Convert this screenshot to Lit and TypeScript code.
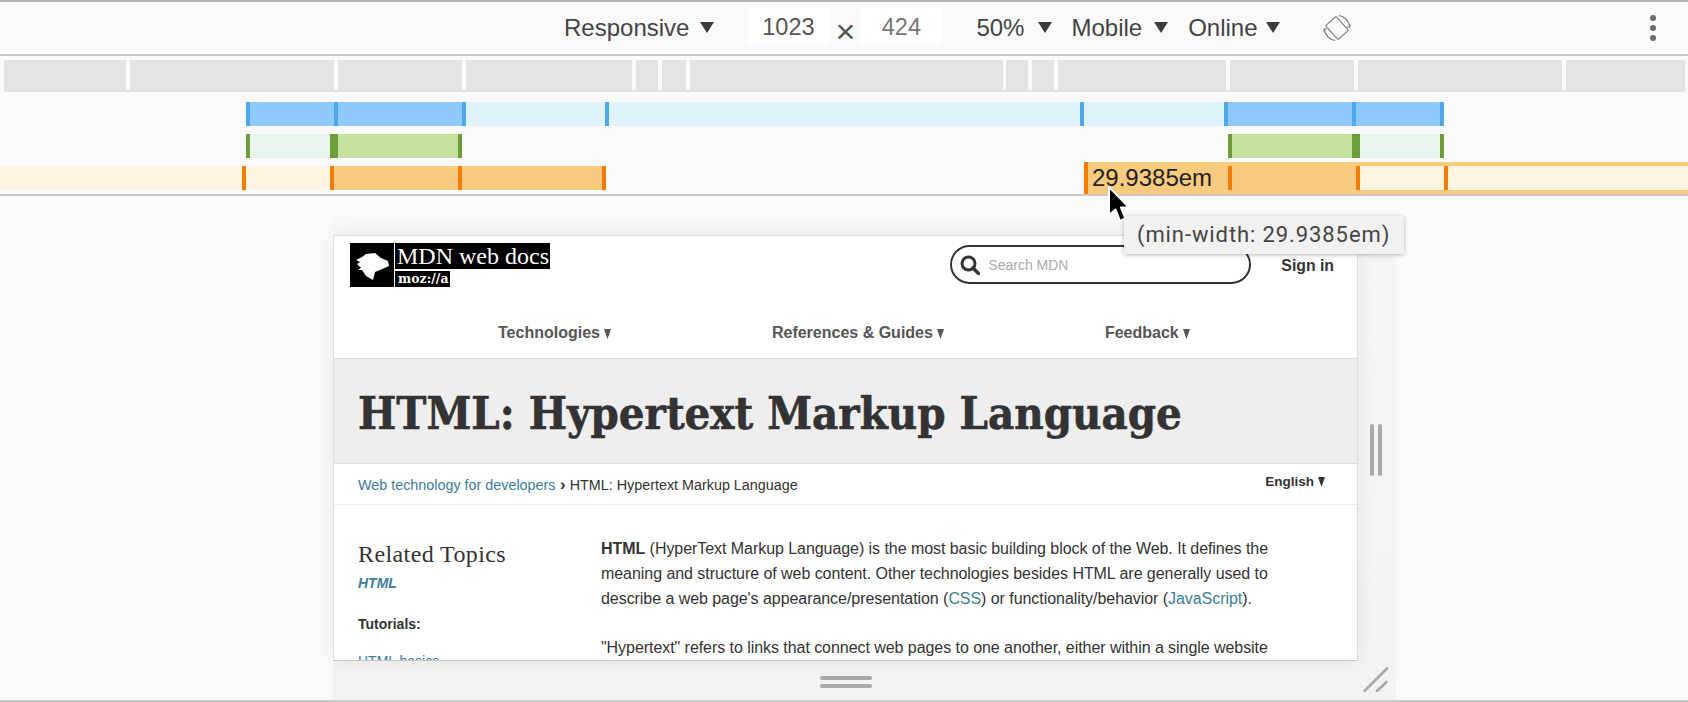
import { LitElement, html, css } from "lit";
import { customElement } from "lit/decorators.js";

type Piece = [number, string];
// A band is a list of [end-x, class] pieces laid out left to right from `start`.
const bandPieces = (start: number, pieces: Piece[]) => {
  let x = start;
  return pieces.map(([end, cls]) => {
    const w = end - x;
    x = end;
    return html`<i class=${cls} style="width:${w}px"></i>`;
  });
};

const rulerPieces: Piece[] = [
  [126, ""], [130, "t"], [334, ""], [338, "t"], [462, ""], [466, "t"], [632, ""], [636, "t"],
  [658, ""], [662, "t"], [686, ""], [690, "t"], [1003, ""], [1006, "t"], [1028, ""], [1032, "t"],
  [1054, ""], [1058, "t"], [1226, ""], [1230, "t"], [1354, ""], [1358, "t"], [1562, ""], [1566, "t"],
];
const bluePieces: Piece[] = [
  [246, ""], [250, "m"], [334, "d"], [338, "m"], [462, "d"], [466, "m"], [605, "l"], [609, "m"],
  [1080, "l"], [1084, "m"], [1224, "l"], [1228, "m"], [1352, "d"], [1356, "m"], [1440, "d"], [1444, "m"],
];
const greenPieces: Piece[] = [
  [246, ""], [250, "m"], [330, "l"], [338, "m"], [458, "d"], [462, "m"], [1228, ""], [1232, "m"],
  [1352, "d"], [1360, "m"], [1440, "l"], [1444, "m"],
];
const orangePieces: Piece[] = [
  [242, "l"], [246, "m"], [330, "l"], [334, "m"], [458, "d"], [462, "m"], [602, "d"], [606, "m"], [1084, ""],
];
const hoverPieces: Piece[] = [
  [1232, "m"], [1356, "d"], [1360, "m"], [1444, "l"], [1448, "m"], [1688, "l"],
];

const caret = html`<svg class="caret" viewBox="0 0 14 11"><polygon points="0,0 14,0 7,11"></polygon></svg>`;
const tri = html`<svg class="tri" viewBox="0 0 7 10"><polygon points="0,0 7,0 3.5,10"></polygon></svg>`;

@customElement("app-root")
export class AppRoot extends LitElement {
  static styles = css`
    :host {
      display: block;
      width: 1688px;
      height: 702px;
      overflow: hidden;
      position: relative;
      background: #fafafa;
      font-family: "Liberation Sans", Arial, sans-serif;
      color: #333;
    }
    .toolbar {
      box-sizing: border-box;
      height: 56px;
      border-top: 2px solid #b4b4b4;
      border-bottom: 2px solid #c9c9c9;
      display: flex;
      align-items: center;
      padding-left: 564px;
      font-size: 24px;
      color: #444;
      background: #fafafa;
    }
    .toolbar .tb { white-space: nowrap; }
    .caret { width: 14px; height: 11px; fill: #3c3c3c; display: block; margin-top: -2px; }
    .c1 { margin-left: 11px; }
    .box {
      width: 82px;
      height: 36px;
      margin-left: 34px;
      background: #fff;
      text-align: center;
      line-height: 38px;
      font-size: 23.5px;
      color: #555;
      margin-top: -4px;
    }
    .box.one { text-indent: -2px; }
    .box.h { margin-left: 0; color: #777; }
    .cross { width: 30px; text-align: center; font-size: 34px; line-height: 36px; color: #555; margin-top: 6px; }
    .z { margin-left: 34px; }
    .c2 { margin-left: 14px; }
    .mob { margin-left: 19px; }
    .c3 { margin-left: 12px; }
    .onl { margin-left: 20px; }
    .c4 { margin-left: 8px; }
    .rot { width: 28px; height: 28px; margin-left: 43px; display: block; }
    .kebab { margin-left: auto; margin-right: 32px; display: flex; flex-direction: column; gap: 4px; }
    .kebab b { display: block; width: 6px; height: 6px; border-radius: 50%; background: #6e6e6e; }

    .band { display: flex; height: 24px; }
    .band i { display: block; height: 100%; flex: none; }
    .ruler { height: 32px; margin: 4px 0 0 4px; width: 1681px; background: #e4e4e4; }
    .ruler i { height: 30px; }
    .ruler .t { background: #fafafa; }
    .blue { margin-top: 10px; }
    .blue .d { background: #90c8fb; }
    .blue .l { background: #dff3fd; }
    .blue .m { background: #4da6f0; }
    .green { margin-top: 8px; }
    .green .d { background: #c5e1a0; }
    .green .l { background: #e9f5ea; }
    .green .m { background: #6d9e3a; }
    .orange { margin-top: 4px; height: 32px; align-items: center; }
    .orange i { height: 24px; }
    .orange .d { background: #f8ca7e; }
    .orange .l { background: #fff3e1; }
    .orange .m { background: #f57c00; }
    .hover { display: flex; align-items: center; height: 32px; background: #f8ca7e; flex: none; width: 604px; }
    .hover .stem { width: 4px; height: 32px; background: #f57c00; flex: none; }
    .hover .label {
      box-sizing: border-box;
      width: 140px;
      flex: none;
      padding-left: 4px;
      font-size: 24px;
      line-height: 32px;
      color: #222;
    }
    .rule { height: 2px; background: #c9c9c9; }

    .stage { position: relative; height: 506px; }
    .gutter {
      margin-left: 333px;
      width: 1063px;
      height: 504px;
      box-sizing: border-box;
      padding-top: 39px;
      background: linear-gradient(#fafafa 0, #f5f5f5 50px, #f3f3f3 100%);
    }
    .page {
      box-sizing: content-box;
      width: 1023px;
      height: 424px;
      overflow: hidden;
      background: #fff;
      border: 1px solid #dcdcdc;
      border-bottom-color: #c8c8c8;
      box-shadow: 0 0 18px rgba(0, 0, 0, 0.07);
      position: relative;
    }
    .bottomline { height: 2px; background: #c9c9c9; }

    .head { display: flex; height: 58px; padding: 7px 23px 0 16px; box-sizing: border-box; align-items: flex-start; }
    .logo { display: flex; gap: 1px; }
    .mark { width: 44px; height: 44px; background: #000; display: block; }
    .word { display: flex; flex-direction: column; align-items: flex-start; gap: 2px; }
    .mdn {
      background: #000;
      color: #fff;
      font-family: "Liberation Serif", serif;
      font-size: 24px;
      line-height: 26px;
      width: 155px;
      height: 26px;
      padding-left: 2px;
      box-sizing: border-box;
      white-space: nowrap;
    }
    .moz {
      background: #000;
      color: #fff;
      font-family: "DejaVu Serif", serif;
      font-weight: 700;
      font-size: 12.5px;
      line-height: 16px;
      width: 55px;
      height: 16px;
      padding-left: 3px;
      box-sizing: border-box;
      white-space: nowrap;
    }
    .search {
      margin-left: auto;
      margin-top: 2px;
      box-sizing: border-box;
      width: 301px;
      height: 39px;
      border: 2px solid #333;
      border-radius: 20px;
      display: flex;
      align-items: center;
      padding-left: 8px;
      gap: 8px;
      font-size: 14px;
      color: #aaa;
    }
    .search svg { width: 20px; height: 20px; display: block; flex: none; }
    .signin { margin-left: 30px; margin-top: 13px; font-size: 15.8px; font-weight: 700; line-height: 20px; color: #333; white-space: nowrap; }

    .nav {
      box-sizing: border-box;
      height: 65px;
      padding: 29px 0 0 164px;
      display: flex;
      gap: 161px;
      border-bottom: 1px solid #ddd;
      font-size: 16px;
      font-weight: 700;
      line-height: 20px;
      color: #555;
      white-space: nowrap;
    }
    .tri { width: 7px; height: 10px; margin-left: 4px; fill: currentColor; display: inline-block; vertical-align: -1px; }

    .title {
      box-sizing: border-box;
      height: 105px;
      background: #eee;
      border-bottom: 1px solid #ddd;
      padding: 4px 0 0 24px;
      display: flex;
      align-items: center;
      margin: 0;
      font-family: "DejaVu Serif Condensed", "DejaVu Serif", serif;
      font-weight: 700;
      font-stretch: condensed;
      font-size: 45px;
      -webkit-text-stroke: 0.6px #333;
      color: #333;
      white-space: nowrap;
    }
    .crumbs {
      box-sizing: border-box;
      height: 41px;
      border-bottom: 1px solid #eee;
      padding: 11px 32px 0 24px;
      display: flex;
      justify-content: space-between;
      font-size: 14.35px;
      line-height: 20px;
      white-space: nowrap;
    }
    a { color: #3d7e9a; text-decoration: none; }
    .sep { font-weight: 700; font-size: 17px; margin: 0 4px 0 4.5px; }
    .lang { font-size: 13.5px; font-weight: 700; margin-top: -3px; margin-left: -1px; }
    .lang .tri { margin-left: 4px; }

    .body { display: flex; padding-left: 24px; }
    .side { width: 243px; flex: none; }
    .side h3 { margin: 34px 0 0; font-family: "Liberation Serif", serif; font-weight: 400; font-size: 24px; letter-spacing: 0.4px; line-height: 30px; color: #333; }
    .side .cur { display: block; margin-top: 4px; font-size: 14px; line-height: 20px; font-weight: 700; font-style: italic; }
    .side .tut { margin-top: 21px; font-size: 14px; line-height: 20px; font-weight: 700; }
    .side .basic { display: block; margin-top: 17px; font-size: 14px; line-height: 20px; }
    .main { font-size: 16px; letter-spacing: -0.055px; line-height: 25px; color: #333; white-space: nowrap; padding-top: 31px; }
    .main p { margin: 0 0 24px; }

    .hbars { position: absolute; left: 1370px; top: 228px; display: flex; gap: 4px; }
    .hbars b { display: block; width: 4px; height: 52px; background: #a9a9a9; border-radius: 2px; }
    .vbars { position: absolute; left: 820px; top: 480px; display: flex; flex-direction: column; gap: 4px; }
    .vbars b { display: block; width: 52px; height: 4px; background: #a9a9a9; border-radius: 2px; }
    .corner { position: absolute; left: 1362px; top: 470px; width: 28px; height: 26px; display: block; }

    .tip {
      position: absolute;
      left: 1124px;
      top: 216px;
      box-sizing: border-box;
      width: 280px;
      height: 38px;
      background: #f1f1f1;
      box-shadow: 0 1px 4px rgba(0, 0, 0, 0.28);
      font-family: Roboto, sans-serif;
      font-size: 22px;
      letter-spacing: 0.9px;
      line-height: 37px;
      color: #444;
      padding-left: 13px;
      white-space: nowrap;
    }
    .cursor { position: absolute; left: 1105px; top: 186px; width: 26px; height: 38px; display: block; }
  `;

  render() {
    return html`
      <div class="toolbar">
        <span class="tb">Responsive</span>
        <span class="c1">${caret}</span>
        <div class="box one">1023</div>
        <div class="cross">×</div>
        <div class="box h">424</div>
        <span class="tb z">50%</span>
        <span class="c2">${caret}</span>
        <span class="tb mob">Mobile</span>
        <span class="c3">${caret}</span>
        <span class="tb onl">Online</span>
        <span class="c4">${caret}</span>
        <svg class="rot" viewBox="0 0 30 30" fill="none" stroke="#808080" stroke-width="1.3">
          <rect x="7.5" y="5" width="15" height="20" rx="1" transform="rotate(-42 15 15)"></rect>
          <path d="M17 1.6A13.5 13.5 0 0 1 28.4 13"></path>
          <path d="M13 28.4A13.5 13.5 0 0 1 1.6 17"></path>
          <path d="M25.6 13.6l2.8 0.6 1-2.9M4.4 16.4l-2.8-0.6-1 2.9" stroke-width="1.2"></path>
        </svg>
        <div class="kebab"><b></b><b></b><b></b></div>
      </div>

      <div class="band ruler">${bandPieces(4, rulerPieces)}</div>
      <div class="band blue">${bandPieces(0, bluePieces)}</div>
      <div class="band green">${bandPieces(0, greenPieces)}</div>
      <div class="band orange">
        ${bandPieces(0, orangePieces)}
        <div class="hover">
          <span class="stem"></span>
          <span class="label">29.9385em</span>
          ${bandPieces(1228, hoverPieces)}
        </div>
      </div>
      <div class="rule"></div>

      <div class="stage">
        <div class="gutter">
          <div class="page">
            <div class="head">
              <div class="logo">
                <svg class="mark" viewBox="0 0 44 44">
                  <path fill="#fff" d="M16 11L25 10L31 15L38 18L39 23L30 27L25 29L23 37L16 33L12 27L8 27L11 25L7 21L10 19L6 17L12 14Z"></path>
                </svg>
                <div class="word">
                  <span class="mdn">MDN web docs</span>
                  <span class="moz">moz://a</span>
                </div>
              </div>
              <div class="search">
                <svg viewBox="0 0 20 20" fill="none" stroke="#333">
                  <circle cx="8.5" cy="8.5" r="6.5" stroke-width="3"></circle>
                  <path d="M13 13l5.5 5.5" stroke-width="3.4" stroke-linecap="round"></path>
                </svg>
                <span>Search MDN</span>
              </div>
              <div class="signin">Sign in</div>
            </div>
            <div class="nav">
              <span>Technologies${tri}</span>
              <span>References &amp; Guides${tri}</span>
              <span>Feedback${tri}</span>
            </div>
            <h1 class="title">HTML: Hypertext Markup Language</h1>
            <div class="crumbs">
              <span><a>Web technology for developers</a><span class="sep">›</span>HTML: Hypertext Markup Language</span>
              <span class="lang">English${tri}</span>
            </div>
            <div class="body">
              <div class="side">
                <h3>Related Topics</h3>
                <a class="cur">HTML</a>
                <div class="tut">Tutorials:</div>
                <a class="basic">HTML basics</a>
              </div>
              <div class="main">
                <p><b>HTML</b> (HyperText Markup Language) is the most basic building block of the Web. It defines the<br />meaning and structure of web content. Other technologies besides HTML are generally used to<br />describe a web page's appearance/presentation (<a>CSS</a>) or functionality/behavior (<a>JavaScript</a>).</p>
                <p>"Hypertext" refers to links that connect web pages to one another, either within a single website</p>
              </div>
            </div>
          </div>
        </div>
        <div class="bottomline"></div>
        <div class="hbars"><b></b><b></b></div>
        <div class="vbars"><b></b><b></b></div>
        <svg class="corner" viewBox="0 0 28 26" fill="none" stroke="#a9a9a9" stroke-width="2.6" stroke-linecap="round">
          <path d="M2.5 25L25 2.5"></path>
          <path d="M15 25L24.5 16"></path>
        </svg>
      </div>

      <div class="tip">(min-width: 29.9385em)</div>
      <svg class="cursor" viewBox="0 0 26 38">
        <path d="M4 1V29L10.5 23.5L15 35L20.5 32.5L16 21.5H24Z" fill="#000" stroke="#fff" stroke-width="2" stroke-linejoin="round"></path>
      </svg>
    `;
  }
}
